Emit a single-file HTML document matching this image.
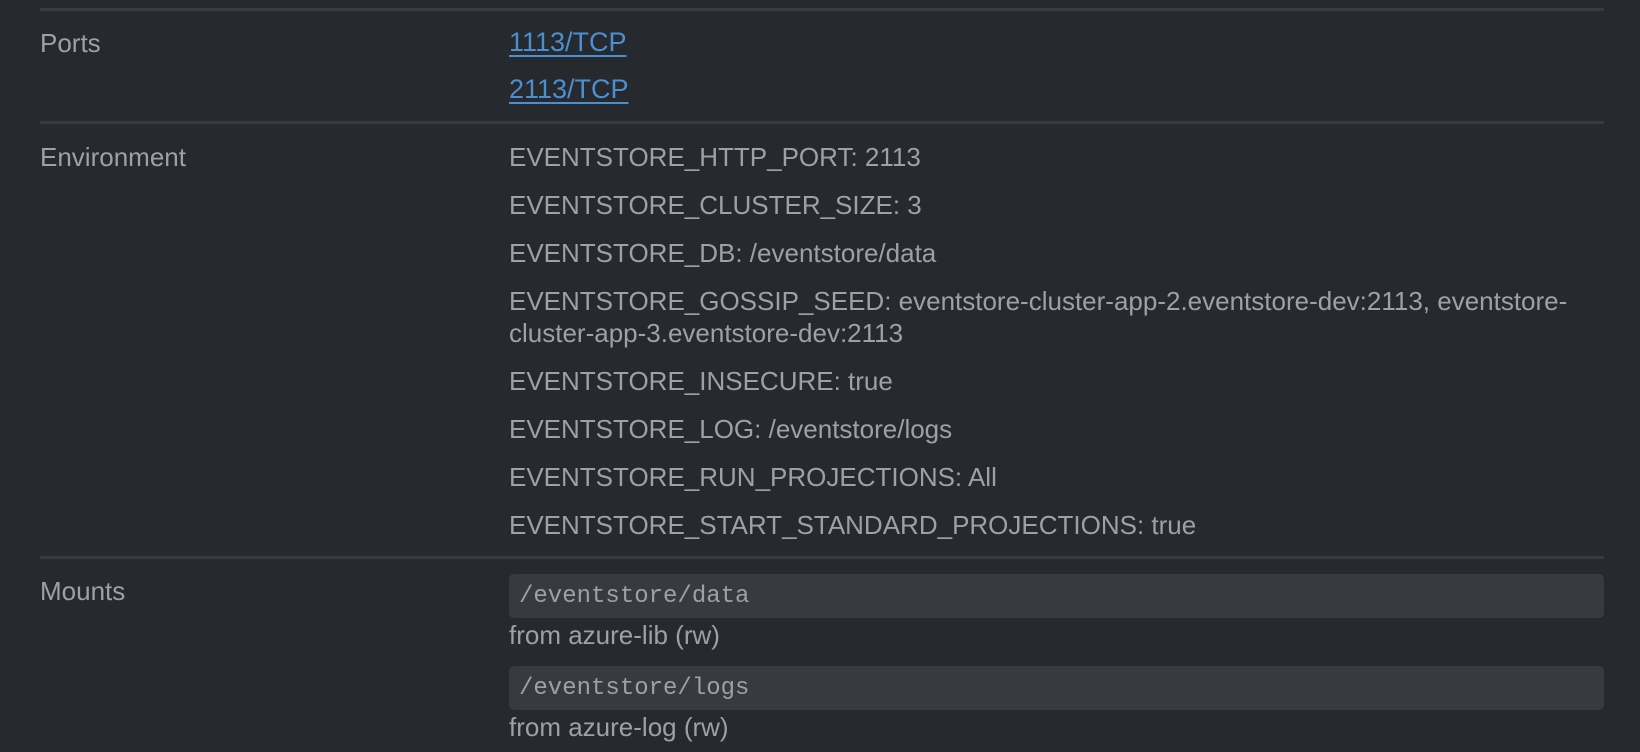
<!DOCTYPE html>
<html><head><meta charset="utf-8"><style>
html,body{margin:0;padding:0;background:#26292e;width:1640px;height:752px;overflow:hidden}
body{font-family:"Liberation Sans",sans-serif;font-size:26px;color:#9da0a5;position:relative}
.hr{position:absolute;left:40px;width:1564px;height:3px;background:#383b40}
.t{position:absolute;line-height:32px;white-space:nowrap}
a{color:#4c8fd1;text-decoration:underline;text-underline-offset:4px;text-decoration-thickness:2px;font-size:27px}
.code{position:absolute;left:509px;width:1095px;height:44px;background:#393a3f;border-radius:5px;font-family:"Liberation Mono",monospace;font-size:24px;line-height:46px;box-sizing:border-box;padding-left:10px;color:#9da0a5}
</style></head><body>
<div class="hr" style="top:8px"></div>
<div class="t" style="left:40px;top:27px">Ports</div>
<div class="t" style="left:509px;top:26px"><a>1113/TCP</a></div>
<div class="t" style="left:509px;top:73px"><a>2113/TCP</a></div>
<div class="hr" style="top:121px"></div>
<div class="t" style="left:40px;top:141px">Environment</div>
<div class="t" style="left:509px;top:141px">EVENTSTORE_HTTP_PORT: 2113</div>
<div class="t" style="left:509px;top:189px">EVENTSTORE_CLUSTER_SIZE: 3</div>
<div class="t" style="left:509px;top:237px">EVENTSTORE_DB: /eventstore/data</div>
<div class="t" style="left:509px;top:285px">EVENTSTORE_GOSSIP_SEED: eventstore-cluster-app-2.eventstore-dev:2113, eventstore-</div>
<div class="t" style="left:509px;top:317px">cluster-app-3.eventstore-dev:2113</div>
<div class="t" style="left:509px;top:365px">EVENTSTORE_INSECURE: true</div>
<div class="t" style="left:509px;top:413px">EVENTSTORE_LOG: /eventstore/logs</div>
<div class="t" style="left:509px;top:461px">EVENTSTORE_RUN_PROJECTIONS: All</div>
<div class="t" style="left:509px;top:509px">EVENTSTORE_START_STANDARD_PROJECTIONS: true</div>
<div class="hr" style="top:556px"></div>
<div class="t" style="left:40px;top:575px">Mounts</div>
<div class="code" style="top:574px">/eventstore/data</div>
<div class="t" style="left:509px;top:619px">from azure-lib (rw)</div>
<div class="code" style="top:666px">/eventstore/logs</div>
<div class="t" style="left:509px;top:711px">from azure-log (rw)</div>
</body></html>
